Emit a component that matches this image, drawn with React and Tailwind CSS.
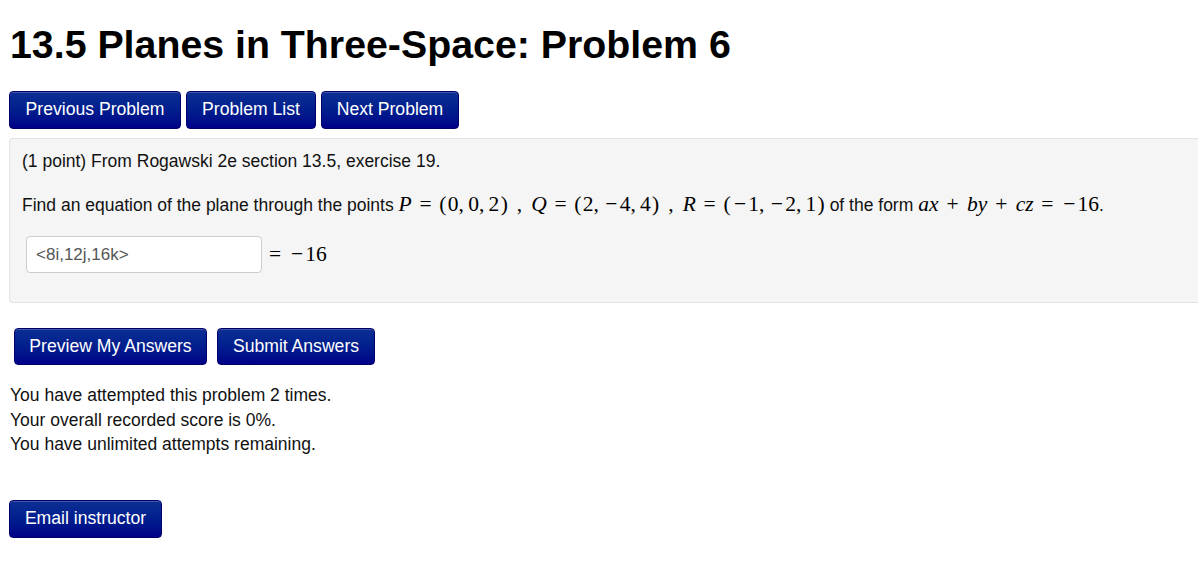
const btn =
  'whitespace-nowrap rounded-[4px] border border-[#00006a] bg-gradient-to-b from-[#0d2f93] to-[#000088] text-white text-[17.6px] leading-none shadow-[inset_0_1px_0_rgba(255,255,255,0.2)]'

// tiny TeX-ish helpers: italic var, relation, binary op, punctuation, minus
const V = ({ c }) => <span className="italic">{c}</span>
const Rel = ({ c }) => <span className="mx-[0.36em]">{c}</span>
const Bin = ({ c }) => <span className="mx-[0.38em]">{c}</span>
const P = ({ c }) => <span className="mr-[0.2em]">{c}</span>
const Minus = () => <span className="px-[0.1em]">−</span>

function Math({ children }) {
  return (
    <span className="whitespace-nowrap font-['Liberation_Serif',serif] text-[21.5px] text-black">
      {children}
    </span>
  )
}

function Num({ v }) {
  return v.startsWith('-') ? (
    <>
      <Minus />
      {v.slice(1)}
    </>
  ) : (
    v
  )
}

function Point({ name, coords }) {
  return (
    <Math>
      <V c={name} />
      <Rel c="=" />
      <span className="mr-[0.06em]">(</span>
      {coords.map((v, i) => (
        <span key={i}>
          {i > 0 && <P c="," />}
          <Num v={v} />
        </span>
      ))}
      <span className="ml-[0.06em]">)</span>
    </Math>
  )
}

const Sep = () => (
  <Math>
    <span className="mx-[0.42em]">,</span>
  </Math>
)

export default function App() {
  return (
    <div className="min-h-screen bg-white font-['Liberation_Sans',Arial,sans-serif] text-[#111]">
      <div className="pl-[9px] pt-[22px]">
        <h1 className="pl-px text-[39.3px] font-bold leading-[44px] text-black">
          13.5 Planes in Three-Space: Problem 6
        </h1>

        <div className="mt-[25px] flex gap-[5px]">
          <button className={`${btn} h-[38px] w-[172px]`}>Previous Problem</button>
          <button className={`${btn} h-[38px] w-[130px]`}>Problem List</button>
          <button className={`${btn} h-[38px] w-[138px]`}>Next Problem</button>
        </div>

        <div className="mt-[9px] h-[165px] rounded-l-[4px] border border-r-0 border-[#e3e3e3] bg-[#f5f5f5] pl-[12px] pt-[11px] text-[17.5px]">
          <p className="leading-[22px]">(1 point) From Rogawski 2e section 13.5, exercise 19.</p>
          <p className="mt-[20px] whitespace-nowrap leading-[24px]">
            Find an equation of the plane through the points{' '}
            <Point name="P" coords={['0', '0', '2']} />
            <Sep />
            <Point name="Q" coords={['2', '-4', '4']} />
            <Sep />
            <Point name="R" coords={['-1', '-2', '1']} />
            <span> of the form </span>
            <Math>
              <V c="ax" />
              <Bin c="+" />
              <V c="by" />
              <Bin c="+" />
              <V c="cz" />
              <Rel c="=" />
              <Minus />
              16
            </Math>
            .
          </p>
          <div className="mt-[19px] flex items-center gap-[7px] pl-[4px]">
            <div className="flex h-[37px] w-[236px] items-center rounded-[4px] border border-[#cccccc] bg-white px-[9px] text-[17px] text-[#555]">
              &lt;8i,12j,16k&gt;
            </div>
            <Math>
              <span className="mr-[0.36em]">=</span>
              <Minus />
              16
            </Math>
          </div>
        </div>

        <div className="mt-[25px] flex gap-[10px] pl-[5px]">
          <button className={`${btn} h-[37px] w-[193px]`}>Preview My Answers</button>
          <button className={`${btn} h-[37px] w-[158px]`}>Submit Answers</button>
        </div>

        <div className="mt-[18px] pl-px text-[17.5px] leading-[24.5px]">
          <p>You have attempted this problem 2 times.</p>
          <p>Your overall recorded score is 0%.</p>
          <p>You have unlimited attempts remaining.</p>
        </div>

        <button className={`${btn} mt-[43px] h-[38px] w-[153px]`}>Email instructor</button>
      </div>
    </div>
  )
}
